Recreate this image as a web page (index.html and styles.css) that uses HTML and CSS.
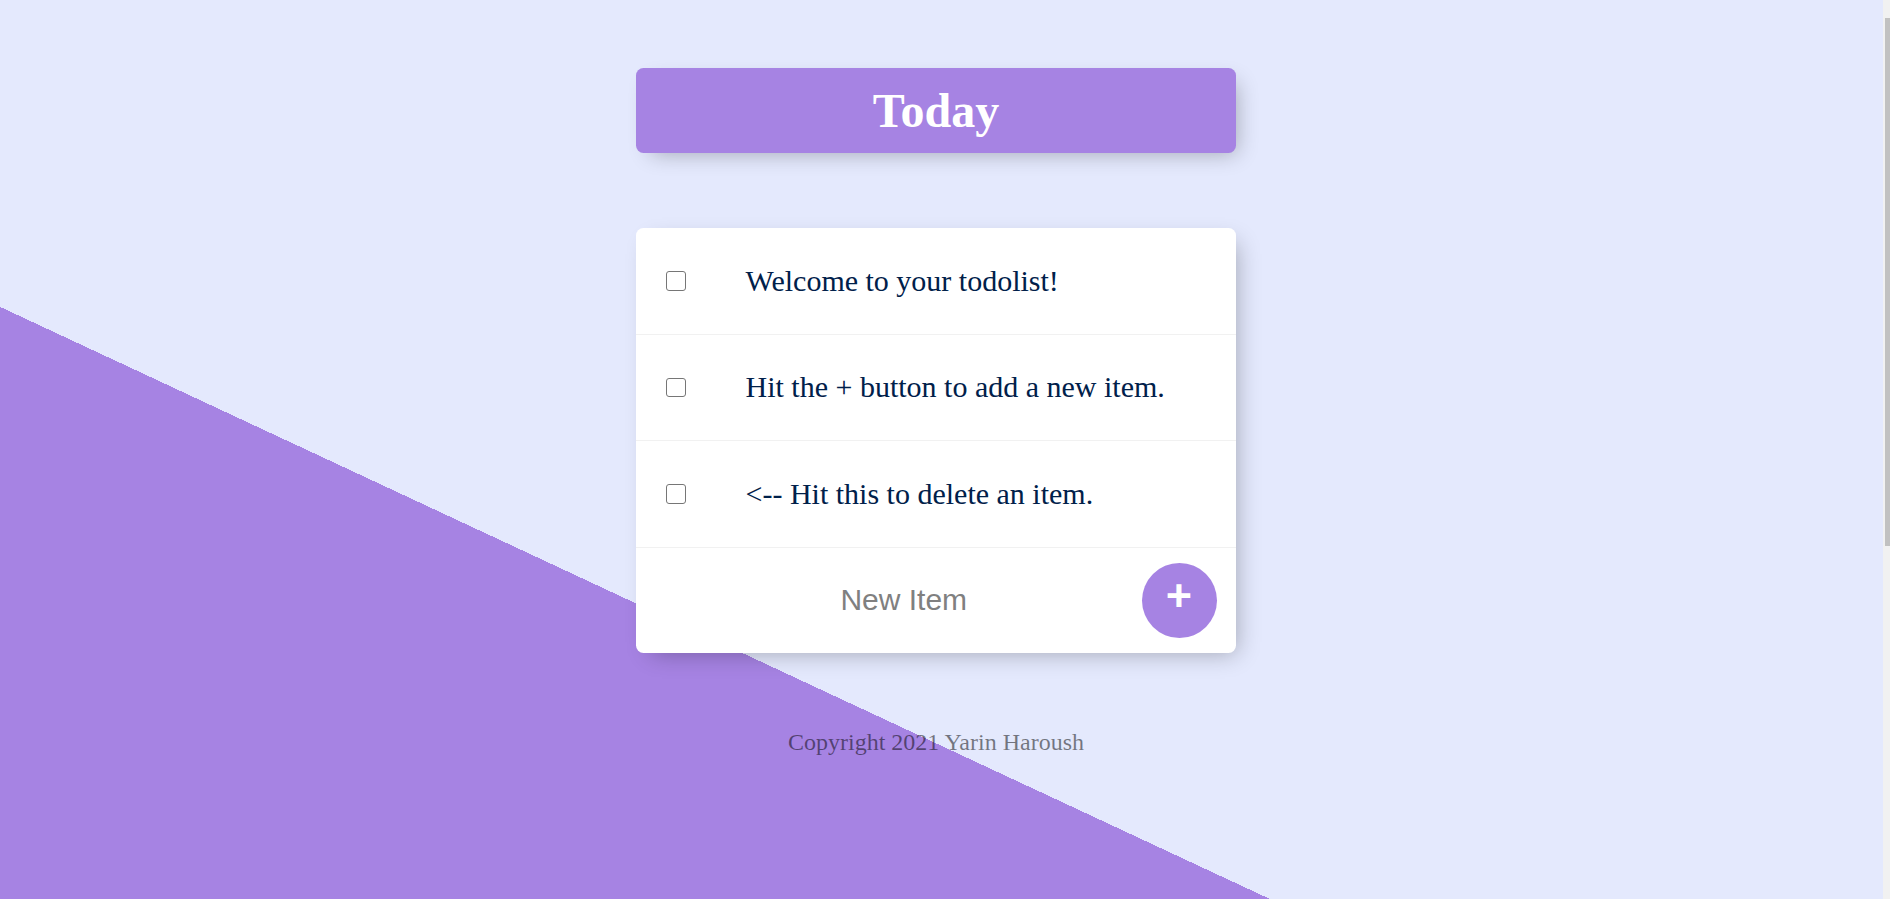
FILE: index.html
```html
<!DOCTYPE html>
<html lang="en">
<head>
  <meta charset="utf-8">
  <title>To Do List</title>
  <link rel="stylesheet" href="styles.css">
</head>
<body>
  <main class="page">
    <div class="box heading">
      <h1 class="heading-title">Today</h1>
    </div>
    <div class="box list">
      <form class="item-form">
        <div class="item">
          <input type="checkbox" class="item-check">
          <p class="item-text">Welcome to your todolist!</p>
        </div>
      </form>
      <form class="item-form">
        <div class="item">
          <input type="checkbox" class="item-check">
          <p class="item-text">Hit the + button to add a new item.</p>
        </div>
      </form>
      <form class="item-form">
        <div class="item">
          <input type="checkbox" class="item-check">
          <p class="item-text">&lt;-- Hit this to delete an item.</p>
        </div>
      </form>
      <form class="item new-item">
        <input type="text" class="new-input" name="newItem" placeholder="New Item" autocomplete="off">
        <button type="button" class="add-btn">+</button>
      </form>
    </div>
    <footer class="footer">Copyright 2021 Yarin Haroush</footer>
  </main>
  <div class="scrollbar" aria-hidden="true">
    <div class="scrollbar-thumb"></div>
  </div>
</body>
</html>
```
FILE: styles.css
```css
html {
  background-color: #E4E9FD;
}

body {
  margin: 0;
  padding-right: 18px;
  min-height: 1495px;
  box-sizing: border-box;
  background-color: #E4E9FD;
  background-image: linear-gradient(25deg, #A683E3 50%, #E4E9FD 50%);
  font-family: "Liberation Serif", "Times New Roman", serif;
}

.page {
  display: flex;
  flex-direction: column;
  align-items: center;
  padding-top: 68px;
}

.box {
  width: 600px;
  background: #fff;
  border-radius: 7.5px;
  box-shadow: 7.5px 7.5px 22.5px -7.5px rgba(0, 0, 0, 0.3);
}

.heading {
  background: #A683E3;
  text-align: center;
}

.heading-title {
  margin: 0;
  padding: 15px;
  color: #fff;
  font-size: 48px;
  font-weight: bold;
  line-height: 55px;
}

.list {
  margin-top: 75px;
}

.item-form {
  margin: 0;
}

.item {
  min-height: 105.5px;
  display: flex;
  align-items: center;
  border-bottom: 1px solid #F1F1F1;
}

.new-item {
  min-height: 105px;
  border-bottom: 0;
  margin: 0 0 0 30px;
}

.item-check {
  appearance: none;
  -webkit-appearance: none;
  box-sizing: border-box;
  flex-shrink: 0;
  width: 19.5px;
  height: 19.5px;
  margin: 30px;
  border: 1.5px solid #767676;
  border-radius: 3px;
  background: #fff;
}

.item-text {
  margin: 0;
  padding: 30px;
  font-size: 30px;
  color: #00204a;
}

.new-input {
  width: 469.5px;
  height: 90px;
  padding: 1.5px 3px;
  border: none;
  background: transparent;
  font-family: "Liberation Sans", Arial, sans-serif;
  font-size: 30px;
  text-align: center;
  color: #000;
  outline: none;
}

.new-input::placeholder {
  color: grey;
  opacity: 1;
}

.add-btn {
  flex-shrink: 0;
  width: 75px;
  min-height: 75px;
  border: 0;
  border-radius: 50%;
  padding: 1.5px 9px 9px;
  background: #A683E3;
  color: #fff;
  font-family: "Liberation Sans", Arial, sans-serif;
  font-size: 45px;
  font-weight: bold;
  line-height: normal;
}

.footer {
  margin-top: 76px;
  font-size: 24px;
  color: rgba(0, 0, 0, 0.5);
  text-align: center;
}

.scrollbar {
  position: fixed;
  top: 0;
  right: 0;
  width: 7px;
  height: 100%;
  display: flex;
  flex-direction: column;
  background: #f1f1f1;
}

.scrollbar-thumb {
  margin: 18px 0 0 2px;
  height: 528px;
  background: #c1c1c1;
}
```
